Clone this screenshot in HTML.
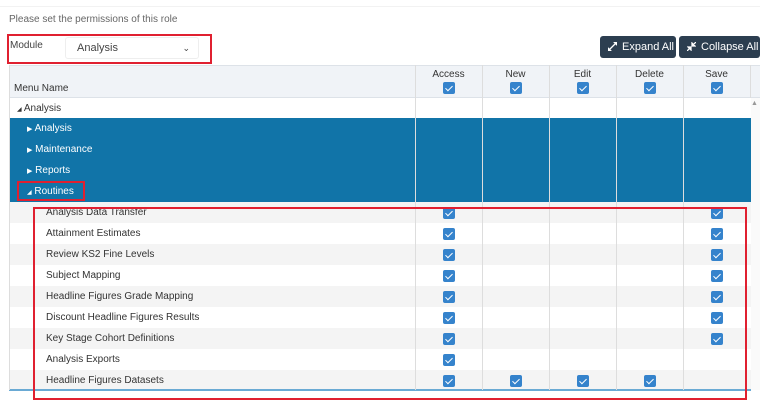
<!DOCTYPE html>
<html><head><style>
*{margin:0;padding:0;box-sizing:border-box}
body{width:768px;height:410px;background:#fff;font-family:"Liberation Sans",sans-serif;position:relative;overflow:hidden;color:#333}
.a{position:absolute}
.cb{position:absolute;width:12px;height:12px;background:#3583cc;border-radius:2px}
.cb:after{content:"";position:absolute;left:4px;top:1.5px;width:3px;height:6px;border:solid #fff;border-width:0 1.5px 1.5px 0;transform:rotate(45deg)}
.btn{position:absolute;top:36px;height:22px;background:#2c3e50;color:#fff;font-size:11px;border-radius:3px;line-height:22px;padding-left:22px}
.btn svg{position:absolute;left:8px;top:6px}
.row{position:absolute;left:9px;width:742px;height:21px;font-size:10px;line-height:22px}
.vl{position:absolute;top:65px;width:1px;background:#ddd}
</style></head><body>
<div class="a" style="left:0;top:0;width:760px;height:7px;border-bottom:1px solid #f2f2f2"></div>
<div class="a" style="left:9px;top:14px;font-size:10px;color:#666">Please set the permissions of this role</div>
<div class="a" style="left:7px;top:34px;width:205px;height:30px;border:2px solid #e02030"></div>
<div class="a" style="left:10px;top:40px;font-size:10px;color:#444">Module</div>
<div class="a" style="left:65px;top:37px;width:134px;height:22px;border:1px solid #eee;border-radius:3px;font-size:11px;line-height:20px;padding-left:11px;color:#444">Analysis<span style="position:absolute;right:8px;top:0;font-size:9px">&#8964;</span></div>
<div class="btn" style="left:600px;width:76px"><svg width="9" height="9" viewBox="0 0 9 9"><path d="M0 9V6L3 9ZM9 0V3L6 0ZM1 8L8 1" stroke="#fff" fill="#fff" stroke-width="1.3"/></svg>Expand All</div>
<div class="btn" style="left:679px;width:81px"><svg width="9" height="9" viewBox="0 0 9 9"><path d="M4 5H1L4 8ZM5 4H8L5 1ZM0 9L3.5 5.5M9 0L5.5 3.5" stroke="#fff" fill="#fff" stroke-width="1.3"/></svg>Collapse All</div>
<div class="a" style="left:9px;top:65px;width:751px;height:33px;background:#f0f3f7;border-top:1px solid #dde2e8;border-bottom:1px solid #dde2e8"></div>
<div class="a" style="left:14px;top:83px;font-size:10px;color:#333">Menu Name</div>
<div class="a" style="left:415px;top:69px;width:67px;text-align:center;font-size:10px">Access</div>
<div class="a" style="left:482px;top:69px;width:67px;text-align:center;font-size:10px">New</div>
<div class="a" style="left:549px;top:69px;width:67px;text-align:center;font-size:10px">Edit</div>
<div class="a" style="left:616px;top:69px;width:67px;text-align:center;font-size:10px">Delete</div>
<div class="a" style="left:683px;top:69px;width:67px;text-align:center;font-size:10px">Save</div>
<div class="cb" style="left:443px;top:82px"></div><div class="cb" style="left:510px;top:82px"></div><div class="cb" style="left:577px;top:82px"></div><div class="cb" style="left:644px;top:82px"></div><div class="cb" style="left:711px;top:82px"></div>
<div class="row" style="top:98px;background:#fff;padding-left:8px;color:#333"><span style="font-size:6px">&#9698;</span> Analysis</div>
<div class="a" style="left:9px;top:118px;width:742px;height:84px;background:#1174a8"></div>
<div class="row" style="top:118px;color:#fff;padding-left:18px"><span style="font-size:7px">&#9654;</span> Analysis</div>
<div class="row" style="top:139px;color:#fff;padding-left:18px"><span style="font-size:7px">&#9654;</span> Maintenance</div>
<div class="row" style="top:160px;color:#fff;padding-left:18px"><span style="font-size:7px">&#9654;</span> Reports</div>
<div class="row" style="top:181px;color:#fff;padding-left:18px"><span style="font-size:6px">&#9698;</span> Routines</div>
<div class="a" style="left:17px;top:181px;width:68px;height:20px;border:2px solid #e02030"></div>
<div class="row" style="top:202px;background:#f4f4f4;padding-left:37px">Analysis Data Transfer</div>
<div class="row" style="top:223px;padding-left:37px">Attainment Estimates</div>
<div class="row" style="top:244px;background:#f4f4f4;padding-left:37px">Review KS2 Fine Levels</div>
<div class="row" style="top:265px;padding-left:37px">Subject Mapping</div>
<div class="row" style="top:286px;background:#f4f4f4;padding-left:37px">Headline Figures Grade Mapping</div>
<div class="row" style="top:307px;padding-left:37px">Discount Headline Figures Results</div>
<div class="row" style="top:328px;background:#f4f4f4;padding-left:37px">Key Stage Cohort Definitions</div>
<div class="row" style="top:349px;padding-left:37px">Analysis Exports</div>
<div class="row" style="top:370px;background:#f4f4f4;padding-left:37px">Headline Figures Datasets</div>
<div class="a" style="left:9px;top:389px;width:742px;height:2px;background:#6aaad4"></div>
<div class="a" style="left:9px;top:65px;width:1px;height:325px;background:#ddd"></div>
<div class="vl" style="left:415px;height:325px"></div><div class="vl" style="left:482px;height:325px"></div><div class="vl" style="left:549px;height:325px"></div><div class="vl" style="left:616px;height:325px"></div><div class="vl" style="left:683px;height:325px"></div><div class="vl" style="left:750px;height:33px"></div>
<div class="a" style="left:751px;top:98px;width:9px;height:292px;background:#fafafa"></div>
<div class="a" style="left:751px;top:100px;font-size:7px;color:#999">&#9650;</div>
<div class="cb" style="left:443px;top:207px"></div><div class="cb" style="left:711px;top:207px"></div>
<div class="cb" style="left:443px;top:228px"></div><div class="cb" style="left:711px;top:228px"></div>
<div class="cb" style="left:443px;top:249px"></div><div class="cb" style="left:711px;top:249px"></div>
<div class="cb" style="left:443px;top:270px"></div><div class="cb" style="left:711px;top:270px"></div>
<div class="cb" style="left:443px;top:291px"></div><div class="cb" style="left:711px;top:291px"></div>
<div class="cb" style="left:443px;top:312px"></div><div class="cb" style="left:711px;top:312px"></div>
<div class="cb" style="left:443px;top:333px"></div><div class="cb" style="left:711px;top:333px"></div>
<div class="cb" style="left:443px;top:354px"></div>
<div class="cb" style="left:443px;top:375px"></div><div class="cb" style="left:510px;top:375px"></div><div class="cb" style="left:577px;top:375px"></div><div class="cb" style="left:644px;top:375px"></div>
<div class="a" style="left:33px;top:207px;width:714px;height:193px;border:2px solid #e02030"></div>
</body></html>
